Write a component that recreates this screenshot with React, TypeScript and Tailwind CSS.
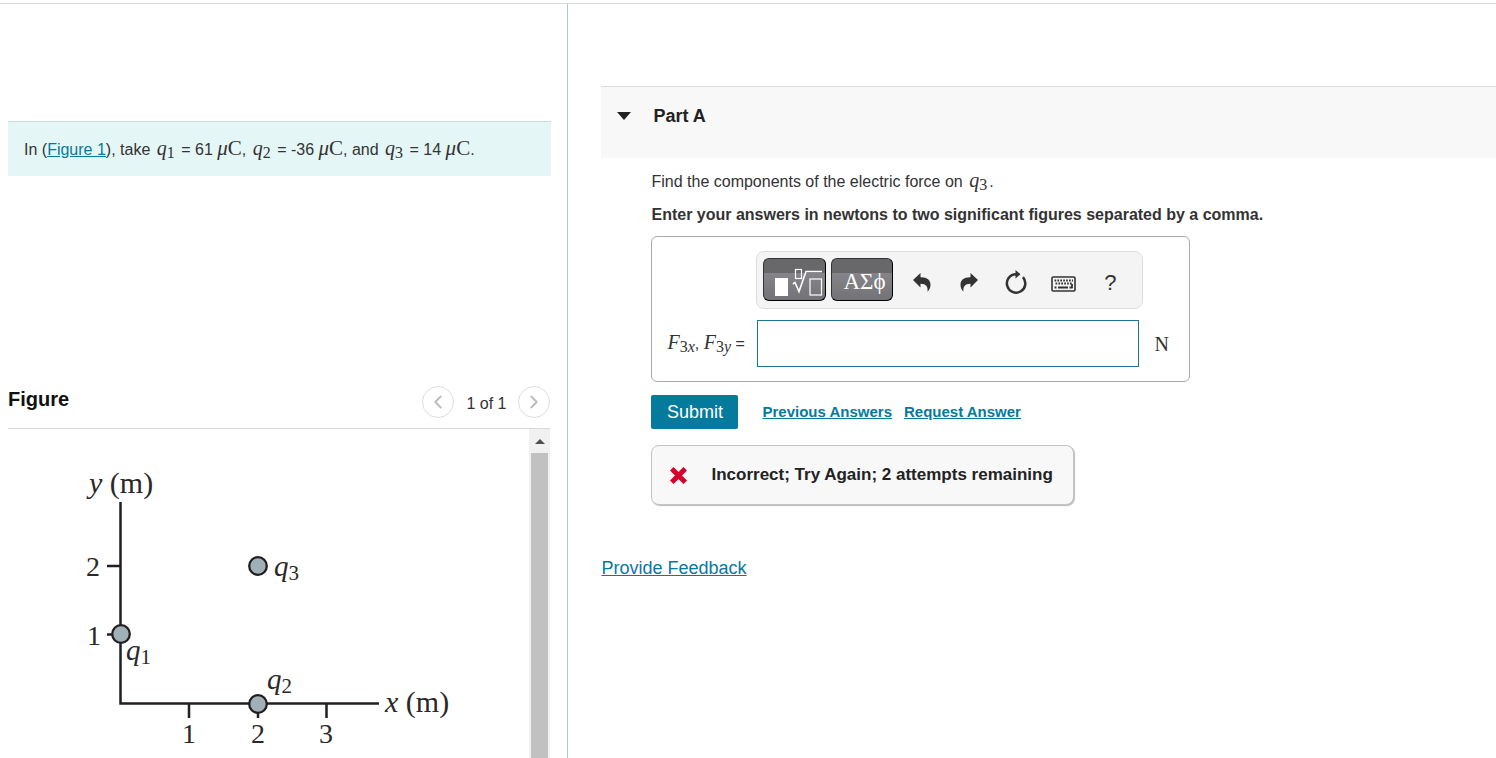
import { useState } from 'react';
import { ChevronLeft, ChevronRight } from 'lucide-react';

type SymbolProps = { name: string; sub: string };

const MathSymbol = ({ name, sub }: SymbolProps) => (
  <span className="mx-0.5 font-['Liberation_Serif',serif] text-xl leading-5">
    <i>{name}</i>
    <span className="relative top-[3px] text-base leading-4">{sub}</span>
  </span>
);

const MicroCoulomb = () => (
  <span className="font-['Liberation_Serif',serif] text-[21px] leading-5">
    <i>μ</i>C
  </span>
);

const charges = [
  { x: 113, y: 205, label: '1', lx: 118, ly: 231 },
  { x: 250, y: 275, label: '2', lx: 259, ly: 260 },
  { x: 250, y: 137, label: '3', lx: 266, ly: 147 },
];

const FigureGraph = () => (
  <svg
    width="500"
    height="328"
    viewBox="0 0 500 328"
    className="shrink-0 font-['Liberation_Serif',serif]"
    role="img"
    aria-label="Figure 1"
  >
    <g stroke="#231f20" strokeWidth="2.5" fill="none">
      <path d="M112.5 73V274.5H371" />
      <path d="M99 137H112M99 205.5H112M181 274V289M250 274V289M318.5 274V289" />
    </g>
    <g fill="#2b2829" fontSize="28">
      <text x="81" y="64" fontSize="30"><tspan fontStyle="italic">y</tspan> (m)</text>
      <text x="377" y="283" fontSize="30"><tspan fontStyle="italic">x</tspan> (m)</text>
      <text x="78" y="147">2</text>
      <text x="79" y="216">1</text>
      <text x="174" y="314">1</text>
      <text x="243" y="314">2</text>
      <text x="311" y="314">3</text>
    </g>
    {charges.map(c => (
      <g key={c.label}>
        <circle cx={c.x} cy={c.y} r="8.8" fill="#9fb1b6" stroke="#231f20" strokeWidth="2.3" />
        <text x={c.lx} y={c.ly} fill="#2b2829" fontSize="29">
          <tspan fontStyle="italic">q</tspan>
          <tspan fontSize="21" dy="4">{c.label}</tspan>
        </text>
      </g>
    ))}
  </svg>
);

const KeyboardIcon = () => (
  <svg
    width="25"
    height="16"
    viewBox="0 0 25 16"
    fill="none"
    stroke="#333"
    className="shrink-0"
    aria-hidden="true"
  >
    <rect x="1" y="1" width="23" height="14" rx="1.2" strokeWidth="1.6" />
    <path d="M3.5 4.5H22M4.5 7.5H21" strokeWidth="2" strokeDasharray="1.7 1.2" />
    <path d="M3.5 11.5H5.5M7 11.5H17M18.5 11.5H21.5M21 8V12" strokeWidth="1.8" />
  </svg>
);

const TemplateIcon = () => (
  <svg
    width="50"
    height="29"
    viewBox="0 0 50 29"
    fill="none"
    stroke="#fff"
    className="shrink-0"
    aria-hidden="true"
  >
    <rect x="1" y="10" width="13" height="18" fill="#fff" stroke="none" />
    <rect x="21.5" y="1.5" width="6" height="9" strokeWidth="1.2" />
    <path d="M19 16L21 14.5L25 23.5L32 3.5H48" strokeWidth="1.6" />
    <rect x="36" y="11" width="11.5" height="16" strokeWidth="1.2" />
  </svg>
);

const UndoIcon = ({ flip = false }: { flip?: boolean }) => (
  <svg
    width="18"
    height="19"
    viewBox="0 0 18 19"
    fill="#333"
    className={flip ? '-scale-x-100' : ''}
    aria-hidden="true"
  >
    <path d="M7.5 0V4.2C14 4 17.7 7 17.5 12C17.4 14.8 16.4 17 14.5 18.8C15.2 13.8 13 10.7 7.5 10.8V14.5L0 7Z" />
  </svg>
);

const ResetIcon = () => (
  <svg width="22" height="24" viewBox="0 0 22 24" fill="none" className="shrink-0" aria-hidden="true">
    <path d="M11 4.2A9.2 9.2 0 1 0 17.9 7.2" stroke="#333" strokeWidth="2.5" />
    <path d="M10.5 0L15.5 4.3L10.5 8.5Z" fill="#333" />
  </svg>
);

const paletteButton =
  'flex h-[43px] items-end justify-center rounded-md border border-[#333] border-b-black border-r-black bg-linear-to-b from-[#68686b] from-35% via-[#858489] via-35% to-[#737277]';

const App = () => {
  const [answer, setAnswer] = useState('');
  const [open, setOpen] = useState(true);

  return (
    <div className="flex h-screen flex-col overflow-hidden bg-white pt-[3px] font-['Liberation_Sans',Arial,sans-serif] text-base text-[#333]">
      <div className="flex min-h-0 flex-1 border-t border-[#d9dcde]">
        <aside className="flex w-[38%] shrink-0 flex-col border-r border-[#b3c6d6] pl-2 pr-4">
          <div className="mt-[117px] border-t border-[#ccdddd] bg-[#e5f6f6] px-4 pt-4 pb-[14px] leading-6">
            In (<a href="#figure" className="text-[#047a9c] underline">Figure 1</a>), take{' '}
            <MathSymbol name="q" sub="1" /> = 61 <MicroCoulomb />, <MathSymbol name="q" sub="2" /> = -36{' '}
            <MicroCoulomb />, and <MathSymbol name="q" sub="3" /> = 14 <MicroCoulomb />.
          </div>

          <section id="figure" className="mt-[209px] flex min-h-0 flex-1 flex-col pr-px">
            <header className="flex h-11 shrink-0 items-start justify-between border-b border-[#d9d9d9]">
              <h2 className="text-xl leading-7 font-bold text-[#111]">Figure</h2>
              <div className="flex items-center gap-3 pt-px">
                <button
                  type="button"
                  aria-label="Previous figure"
                  className="flex size-8 items-center justify-center rounded-full border border-[#ddd] text-[#bbb]"
                >
                  <ChevronLeft size={22} />
                </button>
                <span className="pt-1">1 of 1</span>
                <button
                  type="button"
                  aria-label="Next figure"
                  className="flex size-8 items-center justify-center rounded-full border border-[#ddd] text-[#bbb]"
                >
                  <ChevronRight size={22} />
                </button>
              </div>
            </header>
            <div className="flex min-h-0 flex-1 justify-between overflow-hidden">
              <FigureGraph />
              <div className="flex w-[21px] flex-col items-center bg-[#f1f1f1]">
                <button type="button" aria-label="Scroll up" className="flex h-6 w-full items-center justify-center">
                  <svg width="10" height="5" viewBox="0 0 10 5" fill="#505050" aria-hidden="true">
                    <path d="M0 5L5 0L10 5Z" />
                  </svg>
                </button>
                <div className="w-[17px] flex-1 bg-[#c1c1c1]" />
              </div>
            </div>
          </section>
        </aside>

        <main className="min-w-0 flex-1 pl-[33px] pt-[82px]">
          <header className="flex h-[72px] items-start border-t border-[#ddd] bg-[#f8f8f8] px-4 pt-[17px]">
            <button
              type="button"
              aria-expanded={open}
              onClick={() => setOpen(!open)}
              className="flex items-center gap-[22px] text-lg leading-6 font-bold text-[#222]"
            >
              <svg width="14" height="8" viewBox="0 0 14 8" fill="#222" aria-hidden="true">
                <path d="M0 0H14L7 8Z" />
              </svg>
              Part A
            </button>
          </header>

          {open && (
            <section className="pl-[50px] pt-3">
              <p className="leading-6">
                Find the components of the electric force on <MathSymbol name="q" sub="3" />.
              </p>
              <p className="mt-[9px] leading-6 font-bold">
                Enter your answers in newtons to two significant figures separated by a comma.
              </p>

              <div className="mt-[9px] w-[539px] max-w-full rounded-md border border-[#aaa] px-[15px] py-[14px]">
                <div className="ml-[89px] flex h-[58px] w-[387px] items-start rounded-lg border border-[#ddd] bg-[#f4f4f4] pl-[6px] pt-[6px]">
                  <button type="button" aria-label="Templates" className={`${paletteButton} w-[63px] pl-2 pb-[3px]`}>
                    <TemplateIcon />
                  </button>
                  <button
                    type="button"
                    aria-label="Symbols"
                    className={`${paletteButton} ml-[5px] w-[62px] pl-1 pb-1 font-['Liberation_Serif',serif] text-[23px] leading-7 text-white`}
                  >
                    ΑΣϕ
                  </button>
                  <div className="ml-[19px] flex h-12 items-center gap-[27px]">
                    <button type="button" aria-label="Undo" className="flex w-5 justify-center">
                      <UndoIcon />
                    </button>
                    <button type="button" aria-label="Redo" className="flex w-5 justify-center">
                      <UndoIcon flip />
                    </button>
                    <button type="button" aria-label="Reset" className="flex w-5 justify-center">
                      <ResetIcon />
                    </button>
                    <button type="button" aria-label="Keyboard shortcuts" className="flex w-5 justify-center pt-1">
                      <KeyboardIcon />
                    </button>
                    <button type="button" aria-label="Help" className="w-5 text-[22px]">
                      ?
                    </button>
                  </div>
                </div>

                <div className="mt-[11px] flex items-center">
                  <label htmlFor="answer" className="w-[90px] shrink-0 pb-1 whitespace-nowrap">
                    <span className="font-['Liberation_Serif',serif] text-xl">
                      <i>F</i>
                      <span className="relative top-[3px] text-base">3<i>x</i></span>
                    </span>
                    ,{' '}
                    <span className="font-['Liberation_Serif',serif] text-xl">
                      <i>F</i>
                      <span className="relative top-[3px] text-base">3<i>y</i></span>
                    </span>{' '}
                    =
                  </label>
                  <input
                    id="answer"
                    type="text"
                    value={answer}
                    onChange={e => setAnswer(e.target.value)}
                    className="h-[47px] w-[382px] border border-[#1f7590] bg-white px-2 outline-none"
                  />
                  <span className="ml-[15px] font-['Liberation_Serif',serif] text-xl">N</span>
                </div>
              </div>

              <div className="mt-[13px] flex items-center">
                <button type="button" className="h-[34px] w-[87px] rounded-xs bg-[#047a9c] text-lg leading-8 text-white">
                  Submit
                </button>
                <a href="#previous" className="ml-6 text-[15px] font-bold text-[#047a9c] underline">
                  Previous Answers
                </a>
                <a href="#request" className="ml-3 text-[15px] font-bold text-[#047a9c] underline">
                  Request Answer
                </a>
              </div>

              <div
                role="status"
                className="mt-4 flex h-[60px] w-fit items-center rounded-lg border border-[#c3c3c3] bg-[#f8f8f8] pl-[18px] pr-5 text-[17px] font-bold text-[#222] shadow-[1px_1px_1px_#bbb]"
              >
                <svg width="17" height="17" viewBox="0 0 17 17" className="mr-6" aria-hidden="true">
                  <path d="M3.5 3.5L13.5 13.5M13.5 3.5L3.5 13.5" stroke="#d9002b" strokeWidth="5" strokeLinecap="square" />
                </svg>
                Incorrect; Try Again; 2 attempts remaining
              </div>
            </section>
          )}

          <a href="#feedback" className="mt-[49px] inline-block text-lg text-[#047a9c] underline">
            Provide Feedback
          </a>
        </main>
      </div>
    </div>
  );
};

export default App;
